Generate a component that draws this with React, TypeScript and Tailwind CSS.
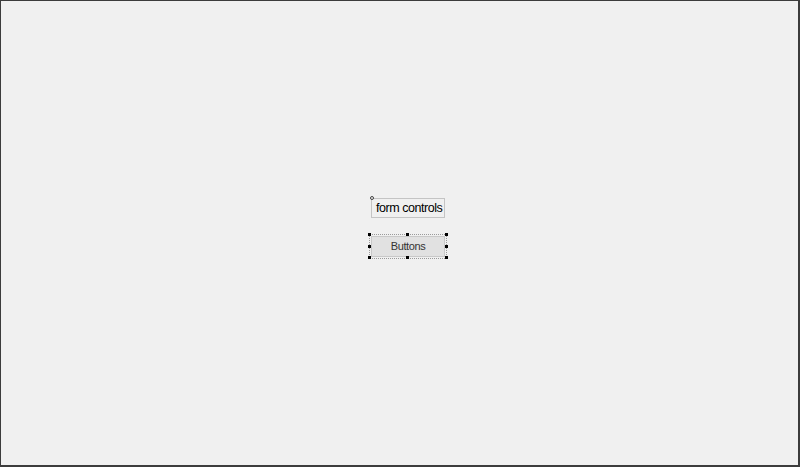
import React from "react";

export default function App() {
  const handles = [
    [368, 233],
    [406, 233],
    [445, 233],
    [368, 245],
    [445, 245],
    [368, 256],
    [406, 256],
    [445, 256],
  ];
  return (
    <div
      className="relative w-[800px] h-[467px] bg-[#f0f0f0] border border-[#3c3c3c] border-r-2 border-b-2 overflow-hidden"
      style={{ fontFamily: '"Liberation Sans", Arial, sans-serif' }}
    >
      {/* label */}
      <div className="absolute left-[370px] top-[197px] w-[74px] h-[20px] border border-[#c4c4c4] flex items-center pl-[4px] text-[12.5px] tracking-[-0.45px] text-black leading-none whitespace-nowrap">
        form controls
      </div>
      <div className="absolute left-[369px] top-[195px] w-[4px] h-[4px] rounded-full border border-[#444] bg-[#f0f0f0]" />

      {/* selection rectangle */}
      <div className="absolute left-[368px] top-[233px] w-[78px] h-[25px] border border-dotted border-[#9a9a9a]" />
      {/* button */}
      <div className="absolute left-[370px] top-[235px] w-[74px] h-[21px] bg-[#e1e1e1] border border-[#c8c8c8] flex items-center justify-center text-[11px] tracking-[-0.4px] text-[#333] whitespace-nowrap">
        Buttons
      </div>
      {handles.map(([x, y], i) => (
        <div
          key={i}
          className="absolute w-[3px] h-[3px] bg-black"
          style={{ left: x - 1, top: y - 1 }}
        />
      ))}
    </div>
  );
}
